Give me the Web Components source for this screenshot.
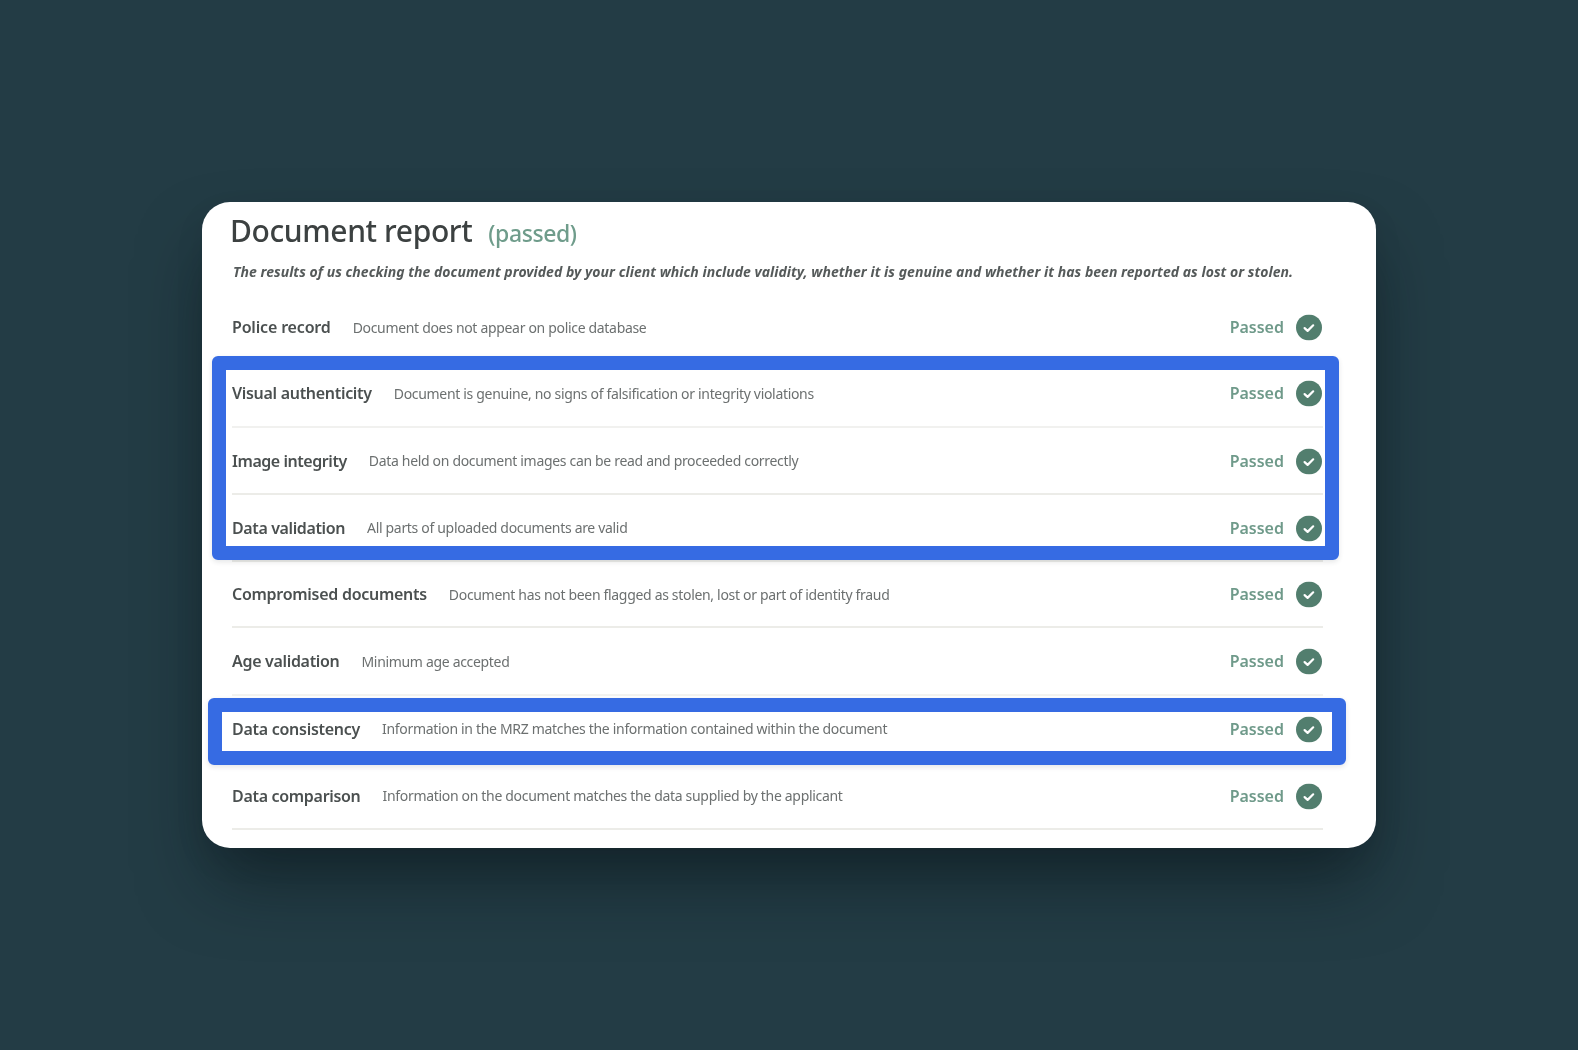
<!DOCTYPE html>
<html>
<head>
<meta charset="utf-8">
<title>Document report</title>
<style>
	html, body { margin: 0; height: 100%; }
	body {
		display: flex;
		align-items: center;
		justify-content: center;
		background: #233c45;
		font-family: "Noto Sans", "Liberation Sans", sans-serif;
	}
</style>
</head>
<body>
<report-card>
	<span slot="title">Document report</span>
	<span slot="status">(passed)</span>
	<span slot="intro">The results of us checking the document provided by your client which include validity, whether it is genuine and whether it has been reported as lost or stolen.</span>

	<report-row h="66" track=".08" style="padding-top:2px" name="Police record" text="Document does not appear on police database"></report-row>
	<report-row h="68" track="-.05" name="Visual authenticity" text="Document is genuine, no signs of falsification or integrity violations" line="#f1f1ef"></report-row>
	<report-row h="67" track="-.2" name="Image integrity" text="Data held on document images can be read and proceeded correctly"></report-row>
	<report-row h="67" track="-.13" name="Data validation" text="All parts of uploaded documents are valid"></report-row>
	<report-row h="66" track="-.03" name="Compromised documents" text="Document has not been flagged as stolen, lost or part of identity fraud"></report-row>
	<report-row h="68" track="-.07" name="Age validation" text="Minimum age accepted" line="#f3f3f0"></report-row>
	<report-row h="67" track="-.02" name="Data consistency" text="Information in the MRZ matches the information contained within the document"></report-row>
	<report-row h="67" track="-.06" name="Data comparison" text="Information on the document matches the data supplied by the applicant"></report-row>

	<report-highlight slot="over" style="left:10px;top:154px;width:1127px;height:204px"></report-highlight>
	<report-highlight slot="over" style="left:6px;top:496px;width:1138px;height:67px"></report-highlight>
</report-card>

<script>
(function(){

	const cardTmpl = document.createElement("template");
	cardTmpl.innerHTML = `
		<style>
			:host {
				display: block;
				position: relative;
				box-sizing: border-box;
				width: 1174px;
				height: 646px;
				padding: 0 53px 18px 30px;
				background: #fff;
				border-radius: 28px;
				box-shadow: 0 40px 70px -10px rgba(8, 18, 22, .55), 0 12px 30px rgba(8, 18, 22, .08);
			}
			header {
				display: flex;
				align-items: baseline;
				gap: 16px;
				height: 59px;
				padding-top: 8px;
				box-sizing: border-box;
			}
			.title {
				margin-left: -2px;
				font-size: 30px;
				font-weight: 500;
				letter-spacing: -.38px;
				color: #3c4141;
				filter: blur(.4px);
			}
			.status {
				font-size: 23px;
				font-weight: 500;
				letter-spacing: -.4px;
				color: #6f9c8b;
				filter: blur(.4px);
			}
			.intro {
				height: 33px;
				padding-left: 1px;
				font-size: 14px;
				font-weight: 700;
				font-style: italic;
				line-height: 22px;
				letter-spacing: .035px;
				white-space: nowrap;
				color: #555a5a;
				filter: blur(.4px);
			}
		</style>
		<header>
			<div class="title"><slot name="title"></slot></div>
			<div class="status"><slot name="status"></slot></div>
		</header>
		<div class="intro"><slot name="intro"></slot></div>
		<slot></slot>
		<slot name="over"></slot>
	`;

	class ReportCard extends HTMLElement {
		constructor() {
			super();
			var shadowRoot = this.attachShadow({mode: "open"});
			shadowRoot.appendChild(cardTmpl.content.cloneNode(true));
		}
	}
	customElements.define("report-card", ReportCard);


	const rowTmpl = document.createElement("template");
	rowTmpl.innerHTML = `
		<style>
			:host {
				display: flex;
				align-items: center;
				box-sizing: border-box;
				border-bottom: 2px solid var(--line, #ecece8);
			}
			.name {
				font-size: 16px;
				font-weight: 600;
				letter-spacing: calc(-.25px + var(--track, 0px));
				color: #4b5050;
				margin-right: 22px;
				white-space: nowrap;
				filter: blur(.4px);
			}
			.text {
				flex: 1;
				font-size: 14px;
				letter-spacing: -.32px;
				color: #6c7070;
				white-space: nowrap;
				filter: blur(.4px);
			}
			.state {
				font-size: 16px;
				font-weight: 600;
				color: #6f9a8a;
				margin-right: 12px;
				filter: blur(.4px);
			}
			svg { display: block; margin-right: 1px; transform: translateY(.5px); filter: blur(.3px); }
		</style>
		<div class="name"></div>
		<div class="text"></div>
		<div class="state">Passed</div>
		<svg width="26" height="26" viewBox="0 0 26 26" aria-hidden="true">
			<circle cx="13" cy="13" r="13" fill="#527e6e"/>
			<path d="M8.6 13.6l3 2.8 5.6-5.6" fill="none" stroke="#fff" stroke-width="2.2" stroke-linecap="round" stroke-linejoin="round"/>
		</svg>
	`;

	class ReportRow extends HTMLElement {
		constructor() {
			super();
			var shadowRoot = this.attachShadow({mode: "open"});
			shadowRoot.appendChild(rowTmpl.content.cloneNode(true));
		}

		connectedCallback() {
			this.shadowRoot.querySelector(".name").textContent = this.getAttribute("name");
			this.shadowRoot.querySelector(".text").textContent = this.getAttribute("text");
			this.style.height = this.getAttribute("h") + "px";
			if ( this.hasAttribute("line") ) {
				this.style.setProperty("--line", this.getAttribute("line"));
			}
			// labels differ a little in width from our font, so each row can nudge its own tracking
			if ( this.hasAttribute("track") ) {
				this.style.setProperty("--track", this.getAttribute("track") + "px");
			}
		}
	}
	customElements.define("report-row", ReportRow);


	const highlightTmpl = document.createElement("template");
	highlightTmpl.innerHTML = `
		<style>
			:host {
				display: block;
				position: absolute;
				box-sizing: border-box;
				border: 14px solid #366be3;
				border-radius: 6px;
				box-shadow: 0 2px 5px rgba(40, 50, 60, .12);
				pointer-events: none;
			}
		</style>
	`;

	class ReportHighlight extends HTMLElement {
		constructor() {
			super();
			var shadowRoot = this.attachShadow({mode: "open"});
			shadowRoot.appendChild(highlightTmpl.content.cloneNode(true));
		}
	}
	customElements.define("report-highlight", ReportHighlight);
}())
</script>
</body>
</html>
